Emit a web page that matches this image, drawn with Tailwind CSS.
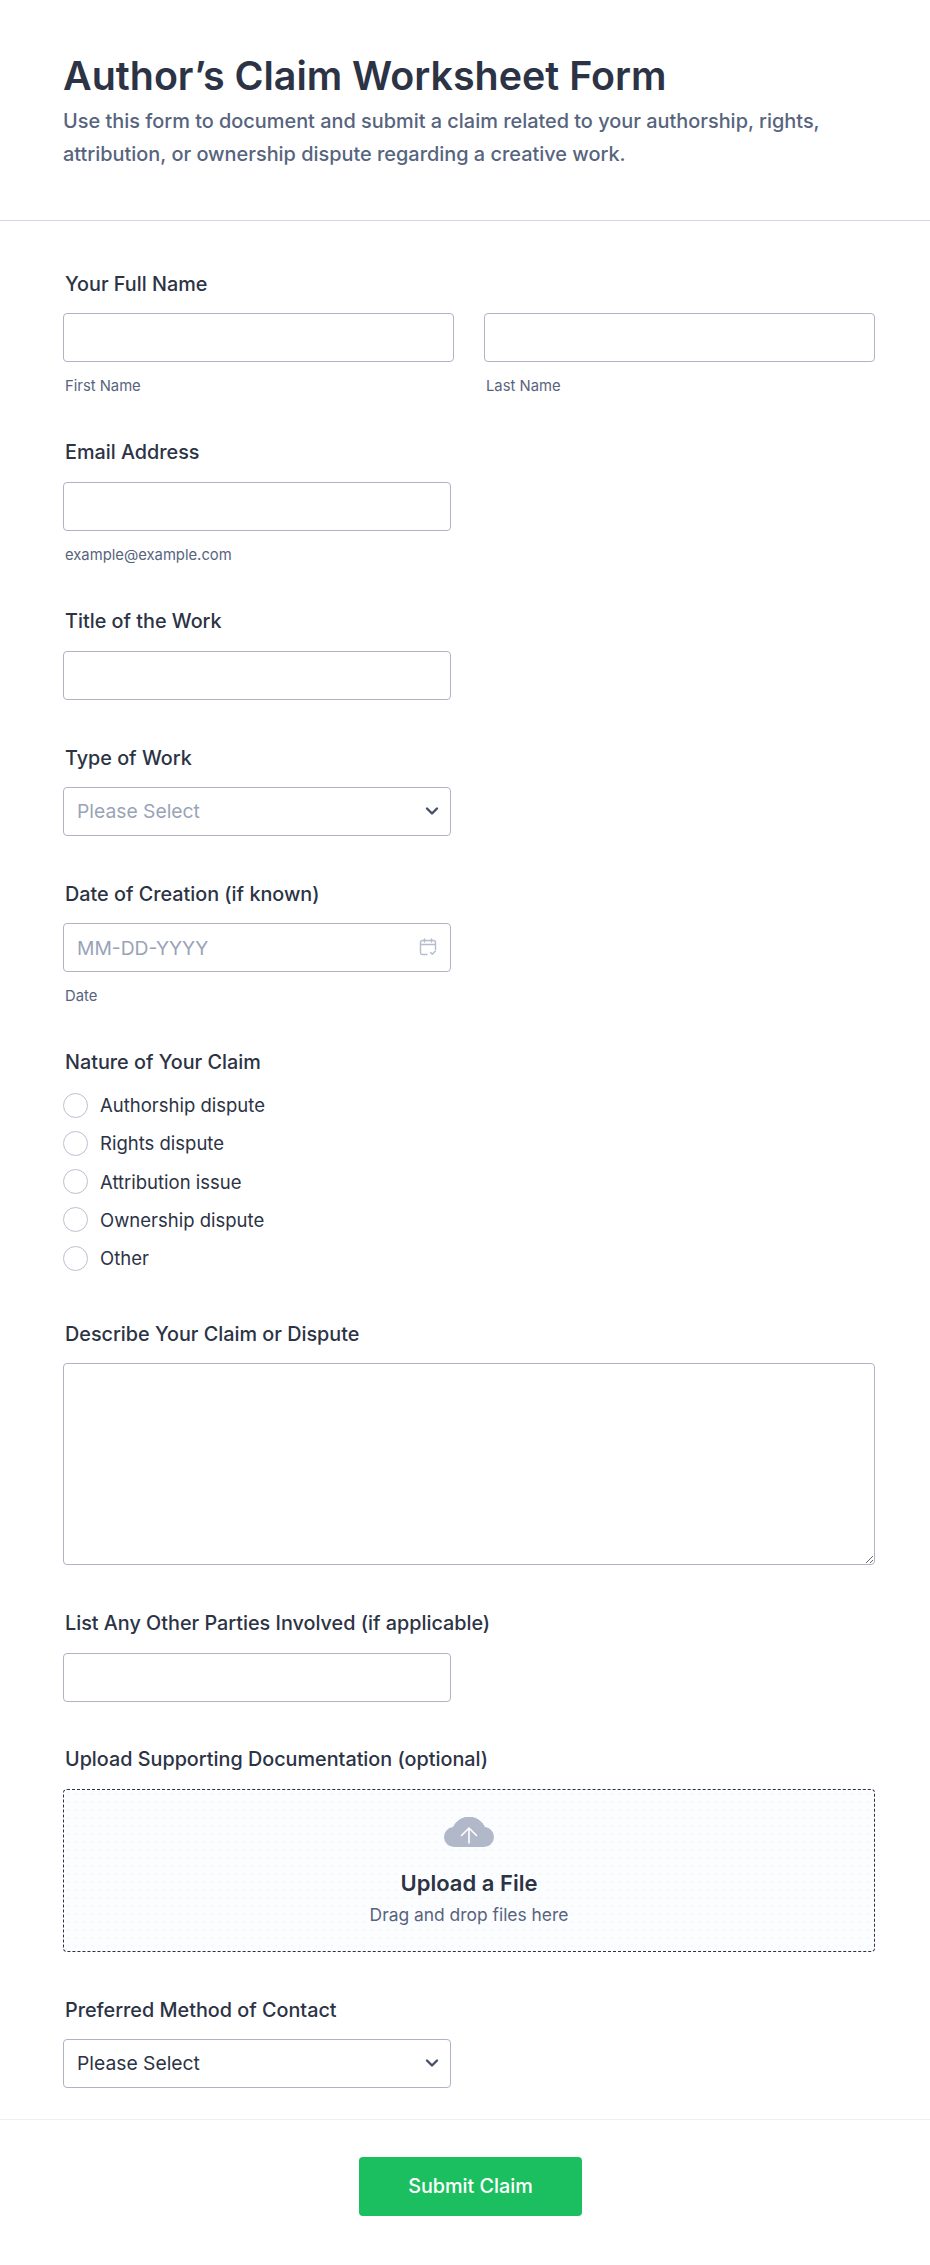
<!DOCTYPE html>
<html lang="en">
<head>
  <meta charset="UTF-8">
  <meta name="viewport" content="width=device-width, initial-scale=1.0">
  <title>Author's Claim Worksheet Form</title>
  <script src="https://cdn.jsdelivr.net/npm/@tailwindcss/browser@4"></script>
</head>
<body class="bg-white font-['Inter',sans-serif] text-[#2c3345]">
  <form class="w-[930px] h-[2265px]">
    <!-- Header -->
    <header class="h-[221px] border-b border-[#d3d6e2] px-[63px] pt-[52px]">
      <h1 class="text-[39.4px] leading-[48px] font-semibold">Author’s Claim Worksheet Form</h1>
      <p class="mt-[5px] text-[19.9px] leading-[33px] font-medium text-[#57647e]">Use this form to document and submit a claim related to your authorship, rights, attribution, or ownership dispute regarding a creative work.</p>
    </header>

    <div class="pl-[63px] pt-[49px]">
      <!-- Name -->
      <div>
        <label class="block pl-[2px] text-[19.8px] leading-[28px] font-medium">Your Full Name</label>
        <div class="mt-[15px] flex gap-[30px] w-[812px]">
          <div class="flex-1">
            <input type="text" class="block w-full h-[49px] rounded-[4px] border border-[#aeb3c6] bg-white">
            <p class="mt-[14px] pl-[2px] text-[14.8px] leading-[20px] text-[#57647e]">First Name</p>
          </div>
          <div class="flex-1">
            <input type="text" class="block w-full h-[49px] rounded-[4px] border border-[#aeb3c6] bg-white">
            <p class="mt-[14px] pl-[2px] text-[14.8px] leading-[20px] text-[#57647e]">Last Name</p>
          </div>
        </div>
      </div>

      <!-- Email -->
      <div class="mt-[42px]">
        <label class="block pl-[2px] text-[19.8px] leading-[28px] font-medium">Email Address</label>
        <input type="email" class="mt-[16px] block w-[388px] h-[49px] rounded-[4px] border border-[#aeb3c6] bg-white">
        <p class="mt-[14px] pl-[2px] text-[14.8px] leading-[20px] text-[#57647e]">example@example.com</p>
      </div>

      <!-- Title -->
      <div class="mt-[42px]">
        <label class="block pl-[2px] text-[19.8px] leading-[28px] font-medium">Title of the Work</label>
        <input type="text" class="mt-[16px] block w-[388px] h-[49px] rounded-[4px] border border-[#aeb3c6] bg-white">
      </div>

      <!-- Type -->
      <div class="mt-[44px]">
        <label class="block pl-[2px] text-[19.8px] leading-[28px] font-medium">Type of Work</label>
        <div class="relative mt-[15px] w-[388px]">
          <select class="block w-full h-[49px] appearance-none rounded-[4px] border border-[#aeb3c6] bg-white pl-[13px] text-[19.3px] text-[#9aa3b7]">
            <option>Please Select</option>
          </select>
          <svg class="absolute right-[12px] top-[19px] w-[14px] h-[10px] text-[#474f6b]" viewBox="0 0 14 10" fill="none" stroke="currentColor" stroke-width="2.4" stroke-linecap="round" stroke-linejoin="round"><path d="M2 2.5l5 5 5-5"/></svg>
        </div>
      </div>

      <!-- Date -->
      <div class="mt-[44px]">
        <label class="block pl-[2px] text-[19.8px] leading-[28px] font-medium">Date of Creation (if known)</label>
        <div class="relative mt-[15px] w-[388px]">
          <input type="text" placeholder="MM-DD-YYYY" class="block w-full h-[49px] rounded-[4px] border border-[#aeb3c6] bg-white pl-[13px] text-[19.3px] placeholder:text-[#9aa3b7]">
          <svg class="absolute right-[14px] top-[15px] w-[18px] h-[18px] text-[#b5bccc]" viewBox="0 0 18 18" fill="none" stroke="currentColor" stroke-width="1.4" stroke-linecap="round" stroke-linejoin="round">
            <path d="M8 16.5H3.5a2 2 0 0 1-2-2v-10a2 2 0 0 1 2-2h11a2 2 0 0 1 2 2v7"/>
            <path d="M1.5 6.5h15M5.5 1v3M12.5 1v3"/>
            <path d="M11.5 14.5l1.8 1.8 3-3.3"/>
          </svg>
        </div>
        <p class="mt-[14px] pl-[2px] text-[14.8px] leading-[20px] text-[#57647e]">Date</p>
      </div>

      <!-- Nature -->
      <div class="mt-[42px]">
        <label class="block pl-[2px] text-[19.8px] leading-[28px] font-medium">Nature of Your Claim</label>
        <div class="mt-[17px] flex flex-col gap-[14.25px]">
          <div class="flex items-center gap-[12px] h-[24px]">
            <span class="w-[25px] h-[25px] rounded-full border border-[#bcc0d0] bg-white shrink-0"></span>
            <span class="text-[18.5px] leading-[24px]">Authorship dispute</span>
          </div>
          <div class="flex items-center gap-[12px] h-[24px]">
            <span class="w-[25px] h-[25px] rounded-full border border-[#bcc0d0] bg-white shrink-0"></span>
            <span class="text-[18.5px] leading-[24px]">Rights dispute</span>
          </div>
          <div class="flex items-center gap-[12px] h-[24px]">
            <span class="w-[25px] h-[25px] rounded-full border border-[#bcc0d0] bg-white shrink-0"></span>
            <span class="text-[18.5px] leading-[24px]">Attribution issue</span>
          </div>
          <div class="flex items-center gap-[12px] h-[24px]">
            <span class="w-[25px] h-[25px] rounded-full border border-[#bcc0d0] bg-white shrink-0"></span>
            <span class="text-[18.5px] leading-[24px]">Ownership dispute</span>
          </div>
          <div class="flex items-center gap-[12px] h-[24px]">
            <span class="w-[25px] h-[25px] rounded-full border border-[#bcc0d0] bg-white shrink-0"></span>
            <span class="text-[18.5px] leading-[24px]">Other</span>
          </div>
        </div>
      </div>

      <!-- Description -->
      <div class="mt-[50px]">
        <label class="block pl-[2px] text-[19.8px] leading-[28px] font-medium">Describe Your Claim or Dispute</label>
        <textarea class="mt-[15px] block w-[812px] h-[202px] rounded-[4px] border border-[#aeb3c6] bg-white"></textarea>
      </div>

      <!-- Other parties -->
      <div class="mt-[44px]">
        <label class="block pl-[2px] text-[19.8px] leading-[28px] font-medium">List Any Other Parties Involved (if applicable)</label>
        <input type="text" class="mt-[16px] block w-[388px] h-[49px] rounded-[4px] border border-[#aeb3c6] bg-white">
      </div>

      <!-- Upload -->
      <div class="mt-[43px]">
        <label class="block pl-[2px] text-[19.8px] leading-[28px] font-medium">Upload Supporting Documentation (optional)</label>
        <div class="mt-[16px] w-[812px] h-[163px] rounded-[4px] border border-dashed border-[#2c3345] bg-[#fcfdff] bg-[radial-gradient(#f6f7fb_1px,transparent_1px)] bg-[size:8px_8px] flex flex-col items-center pt-[27px]">
          <svg class="w-[50px] h-[30px] text-[#b1b8c9]" viewBox="0 0 50 30">
            <path fill="currentColor" d="M10 30A10 10 0 0 1 9 10.050A17.500 17.500 0 0 1 41 10.050A10 10 0 0 1 40 30Z"/>
            <path fill="none" stroke="#ffffff" stroke-width="1.600" stroke-linecap="round" stroke-linejoin="round" d="M25 26V11M17.500 18.500L25 11l7.500 7.500"/>
          </svg>
          <span class="mt-[22px] text-[22px] leading-[28px] font-semibold">Upload a File</span>
          <span class="mt-[6px] text-[17.4px] leading-[24px] text-[#57647e]">Drag and drop files here</span>
        </div>
      </div>

      <!-- Contact -->
      <div class="mt-[44px]">
        <label class="block pl-[2px] text-[19.8px] leading-[28px] font-medium">Preferred Method of Contact</label>
        <div class="relative mt-[15px] w-[388px]">
          <select class="block w-full h-[49px] appearance-none rounded-[4px] border border-[#aeb3c6] bg-white pl-[13px] text-[19.3px] text-[#2c3345]">
            <option>Please Select</option>
          </select>
          <svg class="absolute right-[12px] top-[19px] w-[14px] h-[10px] text-[#474f6b]" viewBox="0 0 14 10" fill="none" stroke="currentColor" stroke-width="2.4" stroke-linecap="round" stroke-linejoin="round"><path d="M2 2.5l5 5 5-5"/></svg>
        </div>
      </div>
    </div>

    <!-- Footer -->
    <footer class="mt-[31px] border-t border-[#eceef4] flex justify-center pt-[37px] pl-[11px]">
      <button type="submit" class="w-[223px] h-[59px] rounded-[4px] bg-[#1bbf5f] text-white text-[19.8px] font-medium">Submit Claim</button>
    </footer>
  </form>
</body>
</html>
